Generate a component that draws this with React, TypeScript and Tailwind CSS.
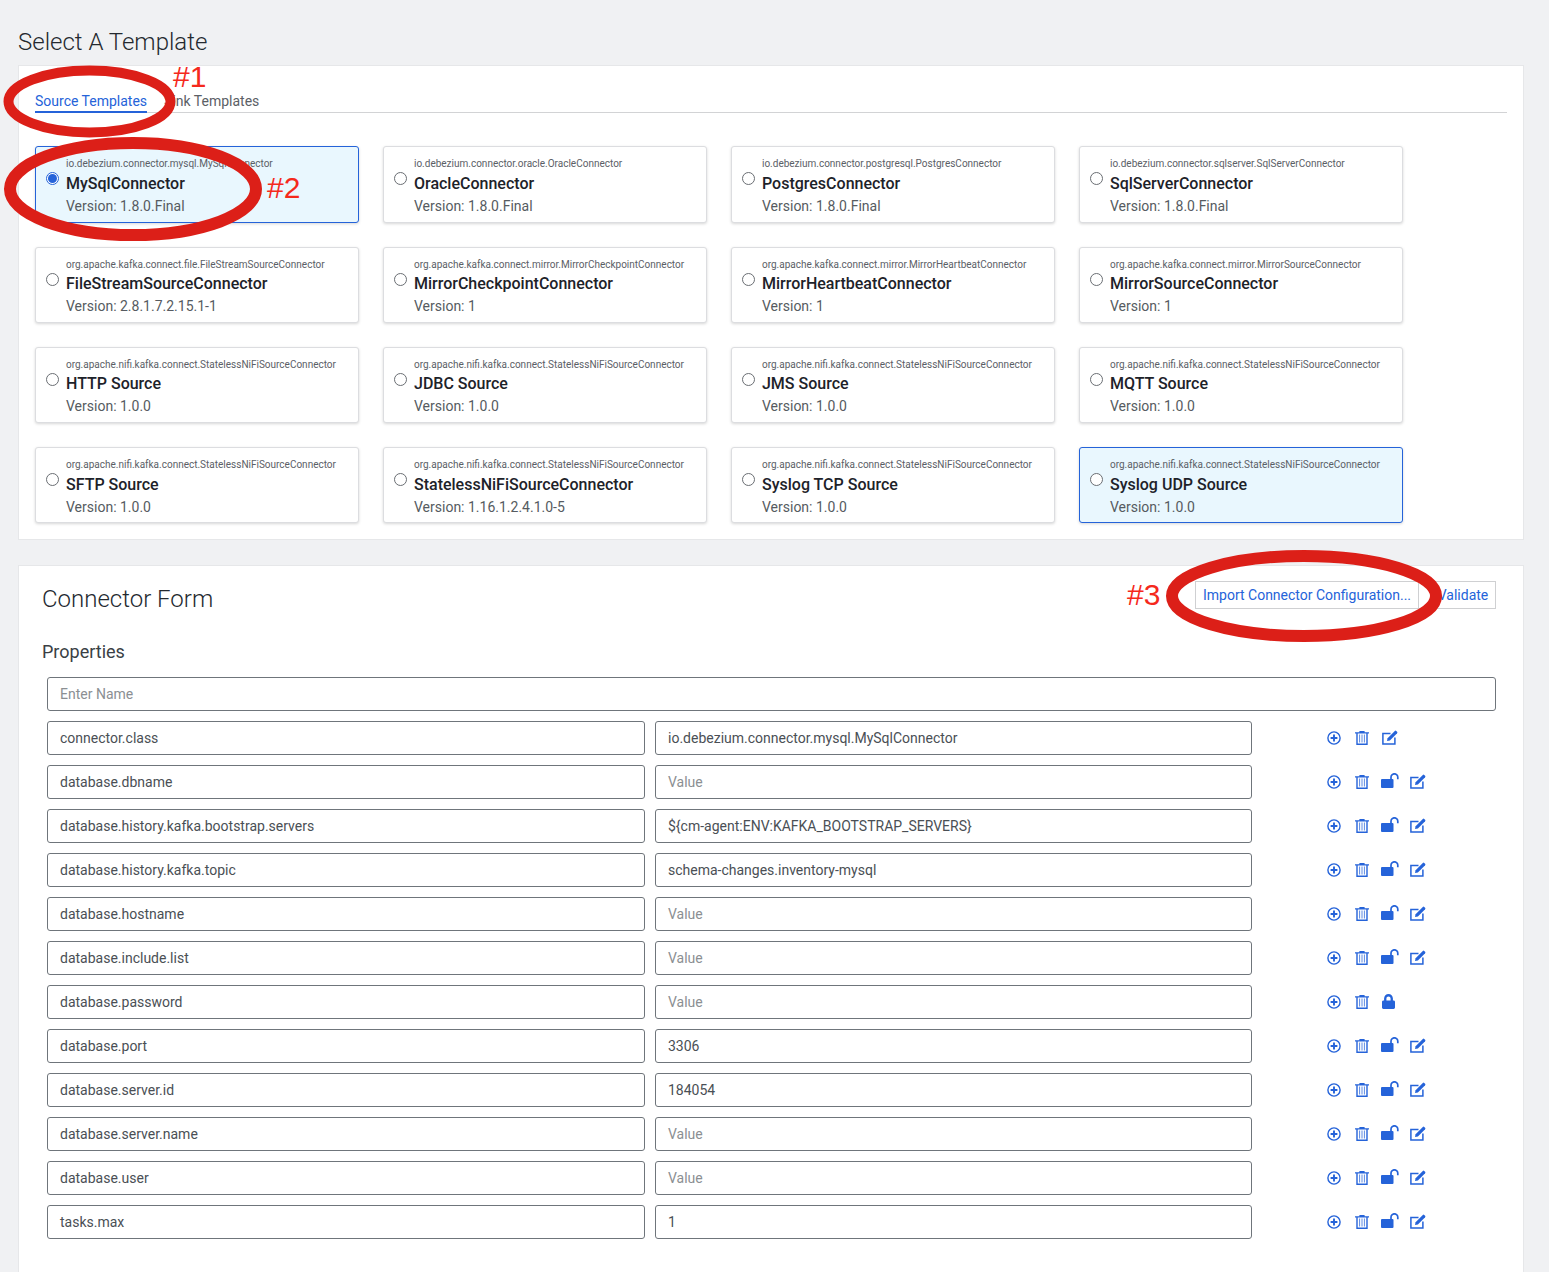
import { FaLock } from "react-icons/fa";

type Template = { id: string; name: string; version: string };

const NIFI = "org.apache.nifi.kafka.connect.StatelessNiFiSourceConnector";

const templates: Template[] = [
  { id: "io.debezium.connector.mysql.MySqlConnector", name: "MySqlConnector", version: "1.8.0.Final" },
  { id: "io.debezium.connector.oracle.OracleConnector", name: "OracleConnector", version: "1.8.0.Final" },
  { id: "io.debezium.connector.postgresql.PostgresConnector", name: "PostgresConnector", version: "1.8.0.Final" },
  { id: "io.debezium.connector.sqlserver.SqlServerConnector", name: "SqlServerConnector", version: "1.8.0.Final" },
  { id: "org.apache.kafka.connect.file.FileStreamSourceConnector", name: "FileStreamSourceConnector", version: "2.8.1.7.2.15.1-1" },
  { id: "org.apache.kafka.connect.mirror.MirrorCheckpointConnector", name: "MirrorCheckpointConnector", version: "1" },
  { id: "org.apache.kafka.connect.mirror.MirrorHeartbeatConnector", name: "MirrorHeartbeatConnector", version: "1" },
  { id: "org.apache.kafka.connect.mirror.MirrorSourceConnector", name: "MirrorSourceConnector", version: "1" },
  { id: NIFI, name: "HTTP Source", version: "1.0.0" },
  { id: NIFI, name: "JDBC Source", version: "1.0.0" },
  { id: NIFI, name: "JMS Source", version: "1.0.0" },
  { id: NIFI, name: "MQTT Source", version: "1.0.0" },
  { id: NIFI, name: "SFTP Source", version: "1.0.0" },
  { id: NIFI, name: "StatelessNiFiSourceConnector", version: "1.16.1.2.4.1.0-5" },
  { id: NIFI, name: "Syslog TCP Source", version: "1.0.0" },
  { id: NIFI, name: "Syslog UDP Source", version: "1.0.0" },
];

const properties = [
  { name: "connector.class", value: "io.debezium.connector.mysql.MySqlConnector", lock: "none" },
  { name: "database.dbname", value: "", lock: "open" },
  { name: "database.history.kafka.bootstrap.servers", value: "${cm-agent:ENV:KAFKA_BOOTSTRAP_SERVERS}", lock: "open" },
  { name: "database.history.kafka.topic", value: "schema-changes.inventory-mysql", lock: "open" },
  { name: "database.hostname", value: "", lock: "open" },
  { name: "database.include.list", value: "", lock: "open" },
  { name: "database.password", value: "", lock: "closed" },
  { name: "database.port", value: "3306", lock: "open" },
  { name: "database.server.id", value: "184054", lock: "open" },
  { name: "database.server.name", value: "", lock: "open" },
  { name: "database.user", value: "", lock: "open" },
  { name: "tasks.max", value: "1", lock: "open" },
];

function Radio({ checked }: { checked?: boolean }) {
  if (checked) {
    return (
      <span className="mt-[25px] flex h-[13px] w-[13px] shrink-0 items-center justify-center rounded-full border border-[#2563d9] bg-white">
        <span className="h-[9px] w-[9px] rounded-full bg-[#2563d9]" />
      </span>
    );
  }
  return <span className="mt-[25px] h-[13px] w-[13px] shrink-0 rounded-full border border-[#6a6e73] bg-white" />;
}

function TemplateCard({ template, index }: { template: Template; index: number }) {
  const active = index === 0 || index === 15;
  return (
    <div
      className={`flex h-[76.3px] gap-[7px] rounded-[3px] border pl-[10px] shadow-[0_1px_3px_rgba(3,3,3,0.16)] ${
        active ? "border-[#2563d9] bg-[#e9f7fe]" : "border-[#dcdde0] bg-white"
      }`}
    >
      <Radio checked={index === 0} />
      <div className="min-w-0">
        <div className="mt-[10px] whitespace-nowrap text-[10px] leading-[14px] text-[#5b6066]">{template.id}</div>
        <div className="mt-[0.4px] whitespace-nowrap text-[16px] font-medium leading-[24px] text-[#1d2229]">{template.name}</div>
        <div className="whitespace-nowrap text-[14px] leading-[21px] text-[#565b61]">Version: {template.version}</div>
      </div>
    </div>
  );
}

function Field({ text, placeholder }: { text: string; placeholder: string }) {
  return (
    <div className="flex h-[34px] items-center rounded-[3px] border border-[#6f757b] bg-white px-3 text-[14px]">
      {text ? <span className="text-[#4a4f55]">{text}</span> : <span className="text-[#8b8f93]">{placeholder}</span>}
    </div>
  );
}

function PlusCircle() {
  return (
    <svg viewBox="0 0 14 14" className="h-[14px] w-[14px]" fill="none" stroke="currentColor">
      <circle cx="7" cy="7" r="6.1" strokeWidth="1.4" />
      <path d="M7 3.6v6.8M3.6 7h6.8" strokeWidth="1.9" />
    </svg>
  );
}

function TrashIcon() {
  return (
    <svg viewBox="0 0 14 14" className="h-[14px] w-[14px]" fill="none" stroke="currentColor">
      <path d="M0 1.9h14M5 1.6V.6h4v1" strokeWidth="1.2" />
      <path d="M2 2v11.3h10V2" strokeWidth="1.4" />
      <path d="M4.6 3.5v8M7 3.5v8M9.4 3.5v8" strokeWidth="1" opacity="0.75" />
    </svg>
  );
}

function UnlockIcon() {
  return (
    <svg viewBox="0 0 18 15" className="h-[15px] w-[18px]" fill="none">
      <rect x="0" y="6" width="12.5" height="9" rx="1" fill="currentColor" />
      <path d="M10 6.5V4.2a3.3 3.3 0 0 1 6.8 0v2" stroke="currentColor" strokeWidth="1.7" />
    </svg>
  );
}

function EditIcon() {
  return (
    <svg viewBox="0 0 16 15" className="h-[15px] w-[16px]" fill="none">
      <path d="M8.5 3.5H.9v10.6h12V7.5" stroke="currentColor" strokeWidth="1.5" />
      <path d="M5 11l.6-2.8L12.8.9a1 1 0 0 1 1.4 0l.9.9a1 1 0 0 1 0 1.4L7.9 10.4z" fill="currentColor" />
    </svg>
  );
}

function RowActions({ lock }: { lock: string }) {
  return (
    <div className="ml-[68px] flex h-[34px] items-center text-[#2563d9]">
      <span className="flex w-[28px] justify-center">
        <PlusCircle />
      </span>
      <span className="flex w-[28px] justify-center">
        <TrashIcon />
      </span>
      {lock === "open" && (
        <span className="mb-[3px] flex w-[28px] justify-center">
          <UnlockIcon />
        </span>
      )}
      {lock === "closed" && (
        <span className="mb-[2px] flex w-[24px] justify-center">
          <FaLock className="h-[15px] w-[13px]" />
        </span>
      )}
      {lock !== "closed" && (
        <span className="mb-[1px] flex w-[28px] justify-center">
          <EditIcon />
        </span>
      )}
    </div>
  );
}

export default function App() {
  return (
    <div className="relative flex h-[1272px] flex-col overflow-hidden bg-[#f0f1f3] pl-[18px] pr-[25px] pt-[24px] font-['Roboto',sans-serif]">
      <h1 className="h-[41px] text-[24px] font-light leading-[36px] text-[#24292f]">Select A Template</h1>

      {/* Templates */}
      <section className="h-[475px] border border-[#e6e7e9] bg-white pl-[16px] pr-[16px] pt-[23px]">
        <div className="flex h-[24px] border-b border-[#d2d3d5] text-[14px]">
          <div className="h-[24px] border-b-2 border-[#2563d9] leading-[24px] text-[#2563d9]">Source Templates</div>
          <div className="ml-[17px] leading-[24px] text-[#5b6066]">Sink Templates</div>
        </div>
        <div className="mt-[33.3px] grid grid-cols-[repeat(4,323.6px)] gap-x-[24.4px] gap-y-[24px]">
          {templates.map((t, i) => (
            <TemplateCard key={t.name} template={t} index={i} />
          ))}
        </div>
      </section>

      {/* Connector form */}
      <section className="mt-[25px] flex-1 border border-b-0 border-[#e6e7e9] bg-white pl-[23px] pr-[27px] pt-[15px]">
        <div className="flex items-start justify-between">
          <h2 className="text-[24px] font-light leading-[36px] text-[#24292f]">Connector Form</h2>
          <div className="flex text-[14px] text-[#2563d9]">
            <button className="h-[28px] w-[224px] border border-[#cfd0d2] bg-white">Import Connector Configuration...</button>
            <button className="ml-[-1px] h-[28px] w-[78px] border border-[#cfd0d2] bg-white pl-[12px]">Validate</button>
          </div>
        </div>
        <h3 className="mt-[21px] text-[18px] leading-[27px] text-[#3a3f45]">Properties</h3>
        <div className="ml-[5px] mt-[12px] flex flex-col gap-[10px]">
          <Field text="" placeholder="Enter Name" />
          {properties.map((p) => (
            <div key={p.name} className="flex">
              <div className="w-[598px]">
                <Field text={p.name} placeholder="" />
              </div>
              <div className="ml-[10px] w-[597px]">
                <Field text={p.value} placeholder="Value" />
              </div>
              <RowActions lock={p.lock} />
            </div>
          ))}
        </div>
      </section>

      {/* Hand drawn annotations over the screenshot */}
      <svg className="pointer-events-none absolute left-0 top-0 h-[1272px] w-[1549px]" viewBox="0 0 1549 1272" fill="none" stroke="#dc1f18">
        <ellipse cx="89.5" cy="101.5" rx="81" ry="31" strokeWidth="10" />
        <ellipse cx="133" cy="189" rx="123" ry="46" strokeWidth="12" />
        <ellipse cx="1304" cy="596" rx="132" ry="40" strokeWidth="12" />
      </svg>
      <span className="absolute left-[173px] top-[59px] font-['Liberation_Sans',sans-serif] text-[30px] leading-[36px] text-[#f5291c]">#1</span>
      <span className="absolute left-[267px] top-[170px] font-['Liberation_Sans',sans-serif] text-[30px] leading-[36px] text-[#f5291c]">#2</span>
      <span className="absolute left-[1127px] top-[577px] font-['Liberation_Sans',sans-serif] text-[30px] leading-[36px] text-[#f5291c]">#3</span>
    </div>
  );
}
